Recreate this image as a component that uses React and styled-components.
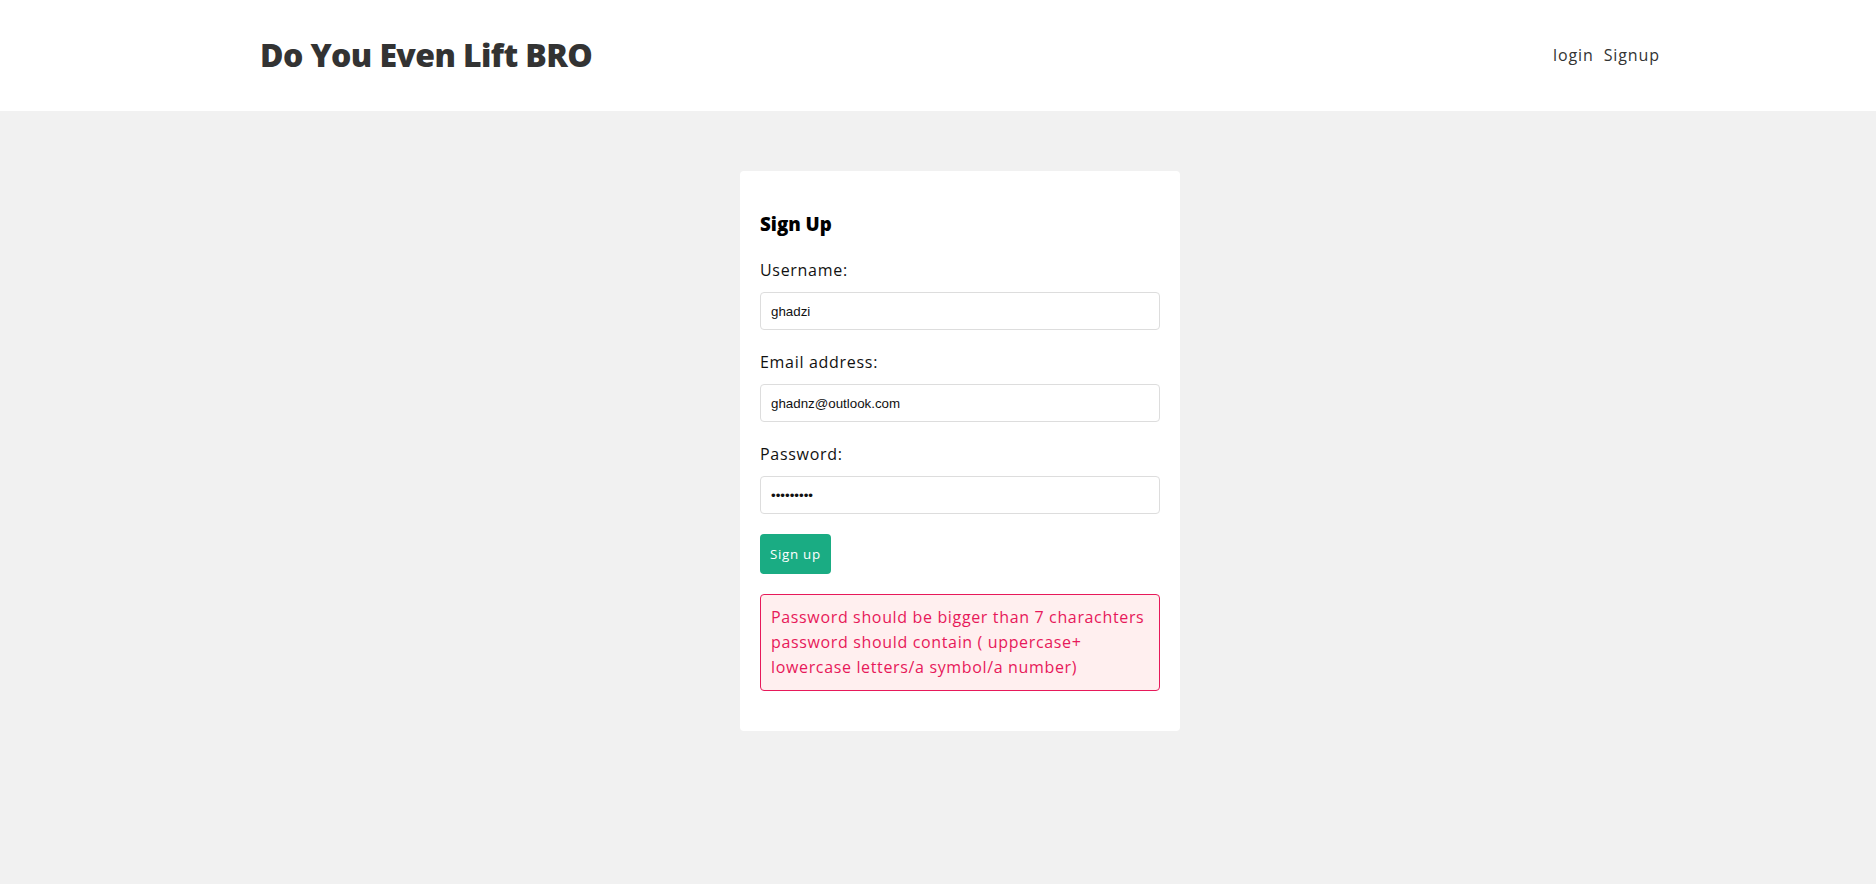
import React, { useState } from "react";
import styled, { createGlobalStyle } from "styled-components";

const GlobalStyle = createGlobalStyle`
  html, body {
    margin: 0;
    padding: 0;
    background: #f1f1f1;
    overflow-x: hidden;
  }
  body {
    font-family: "Open Sans", "Noto Sans", sans-serif;
    color: #333;
  }
  #root {
    width: 1920px;
    min-height: 884px;
  }
`;

const Header = styled.header`
  background: #fff;
`;

const HeaderBar = styled.div`
  max-width: 1400px;
  margin: 0 auto;
  padding: 10px 0;
  display: flex;
  align-items: center;
  justify-content: space-between;
`;

const Brand = styled.h1`
  margin: 21.44px 0;
  font-size: 32px;
  line-height: 48px;
  font-weight: 800;
  letter-spacing: -0.6px;
  color: #333;
`;

const Nav = styled.nav`
  display: flex;
  align-items: center;
`;

const NavLink = styled.a`
  margin-left: 10px;
  color: #333;
  text-decoration: none;
  font-size: 16px;
  line-height: 24px;
  letter-spacing: 0.9px;
`;

const Pages = styled.main`
  max-width: 1400px;
  margin: 0 auto;
  padding: 20px;
`;

const Form = styled.form`
  max-width: 400px;
  margin: 40px auto;
  padding: 20px;
  background: #fff;
  border-radius: 4px;
`;

const Title = styled.h3`
  margin: 18.72px 0 20.5px;
  font-size: 18.72px;
  line-height: 28px;
  font-weight: 800;
  color: #000;
`;

const Label = styled.label`
  display: block;
  font-size: 16px;
  line-height: 24px;
  color: #111;
  letter-spacing: 0.7px;
`;

const Input = styled.input`
  display: block;
  width: 100%;
  height: 38px;
  box-sizing: border-box;
  padding: 10px;
  margin-top: 10px;
  margin-bottom: 20px;
  border: 1px solid #ddd;
  border-radius: 4px;
  font-family: "Liberation Sans", Arial, sans-serif;
  font-size: 13.33px;
  color: #111;
  background: #fff;
  outline: none;
`;

const Button = styled.button`
  background: #1aac83;
  border: 0;
  color: #fff;
  padding: 10px;
  font-family: "Open Sans", "Noto Sans", sans-serif;
  font-size: 13.33px;
  line-height: 20px;
  border-radius: 4px;
  cursor: pointer;
  letter-spacing: 0.7px;
`;

const ErrorBox = styled.div`
  padding: 10px;
  background: #ffefef;
  border: 1px solid #e7195a;
  color: #e7195a;
  border-radius: 4px;
  margin: 20px 0;
  font-size: 16px;
  line-height: 25px;
  letter-spacing: 0.65px;
  white-space: pre-line;
`;

const fields = [
  { label: "Username:", type: "text", key: "username" },
  { label: "Email address:", type: "email", key: "email" },
  { label: "Password:", type: "password", key: "password" },
];

export default function App() {
  const [values, setValues] = useState({
    username: "ghadzi",
    email: "ghadnz@outlook.com",
    password: "ghadzi123",
  });

  const handleChange = (key) => (e) => setValues({ ...values, [key]: e.target.value });

  return (
    <>
      <GlobalStyle />
      <Header>
        <HeaderBar>
          <Brand>Do You Even Lift BRO</Brand>
          <Nav>
            <NavLink href="#">login</NavLink>
            <NavLink href="#">Signup</NavLink>
          </Nav>
        </HeaderBar>
      </Header>
      <Pages>
        <Form onSubmit={(e) => e.preventDefault()}>
          <Title>Sign Up</Title>
          {fields.map((f) => (
            <React.Fragment key={f.key}>
              <Label>{f.label}</Label>
              <Input type={f.type} value={values[f.key]} onChange={handleChange(f.key)} />
            </React.Fragment>
          ))}
          <Button>Sign up</Button>
          <ErrorBox>
            {"Password should be bigger than 7 charachters\npassword should contain ( uppercase+\nlowercase letters/a symbol/a number)"}
          </ErrorBox>
        </Form>
      </Pages>
    </>
  );
}
